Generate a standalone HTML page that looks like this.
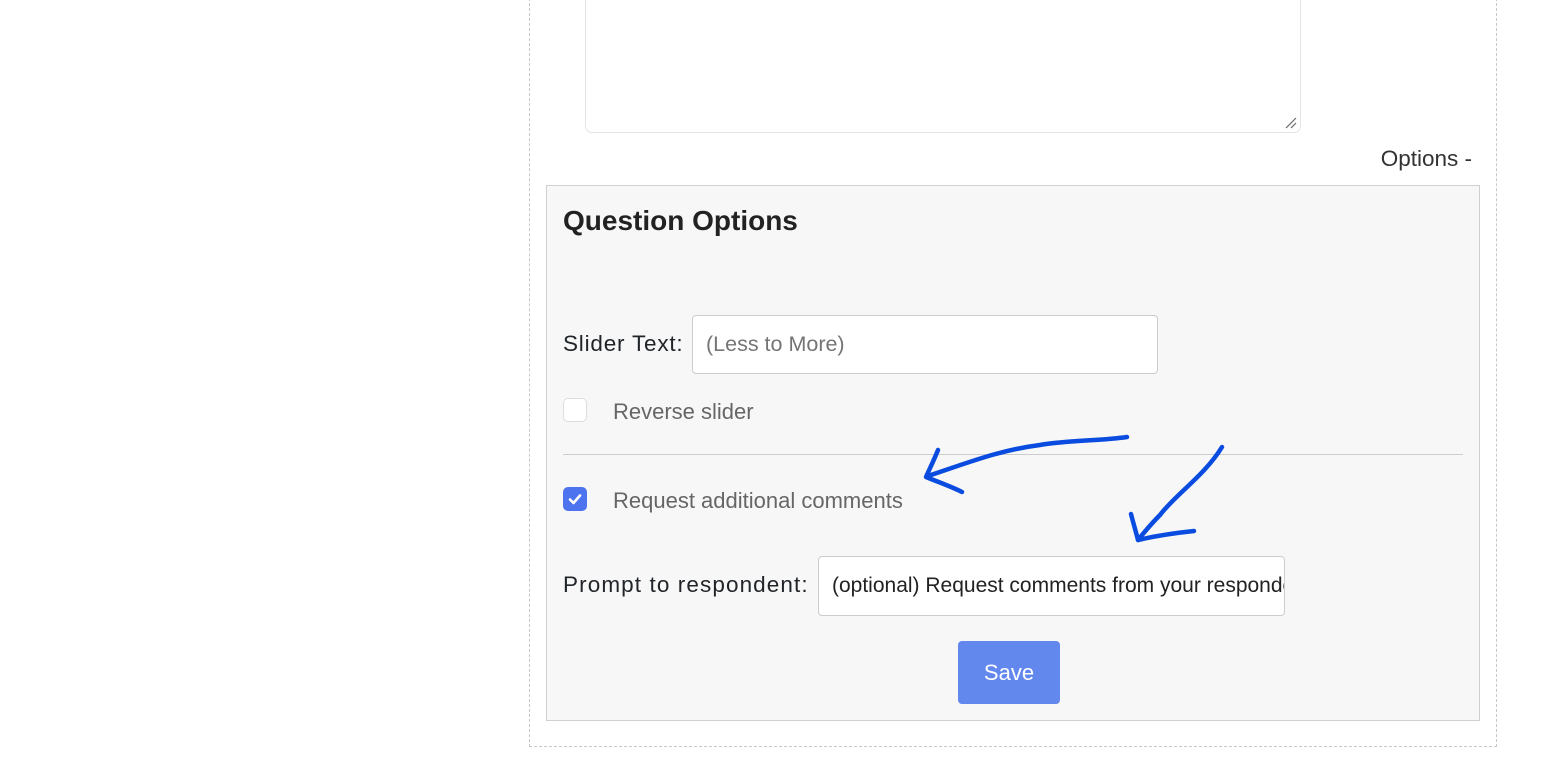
<!DOCTYPE html>
<html><head><style>
html,body{margin:0;padding:0;width:1568px;height:768px;background:#fff;overflow:hidden;font-family:"Liberation Sans",sans-serif;color:#212529;position:relative}
.abs{position:absolute}
</style></head><body>
<div class="abs" style="left:529px;top:-2px;width:966px;height:748px;border:1px dashed #c8c8c8;border-top:none"></div>
<div class="abs" style="left:585px;top:-6px;width:714px;height:137px;border:1px solid #e2e4e8;border-radius:7px;background:#fff"></div>
<svg class="abs" style="left:1284px;top:116px" width="14" height="14"><path d="M2 12L12 2M7 12L12 7" stroke="#666" stroke-width="1.2"/></svg>
<div class="abs" style="left:1300px;width:172px;text-align:right;top:146px;font-size:22.5px;color:#333">Options -</div>
<div class="abs" style="left:546px;top:185px;width:932px;height:534px;border:1px solid #d0d0d0;background:#f7f7f7"></div>
<div class="abs" style="left:563px;top:205px;font-size:28px;font-weight:bold;color:#222">Question Options</div>
<div class="abs" style="left:563px;top:331px;font-size:22.5px;letter-spacing:0.8px">Slider Text:</div>
<div class="abs" style="left:692px;top:315px;width:466px;height:59px;border:1px solid #ccc;border-radius:4px;background:#fff;box-sizing:border-box;padding:16px 13px;font-size:21.5px;color:#757575">(Less to More)</div>
<div class="abs" style="left:563px;top:398px;width:24px;height:24px;border:1px solid #ddd;border-radius:5px;background:#fff;box-sizing:border-box"></div>
<div class="abs" style="left:613px;top:399px;font-size:22px;color:#666">Reverse slider</div>
<div class="abs" style="left:563px;top:454px;width:900px;height:1px;background:#ccc"></div>
<div class="abs" style="left:563px;top:487px;width:24px;height:24px;border-radius:5px;background:#4e73ef"></div>
<svg class="abs" style="left:563px;top:487px" width="24" height="24"><path d="M7 12.5L10.5 16L17 8.5" stroke="#fff" stroke-width="2.6" fill="none" stroke-linecap="round" stroke-linejoin="round"/></svg>
<div class="abs" style="left:613px;top:488px;font-size:22px;color:#666">Request additional comments</div>
<div class="abs" style="left:563px;top:572px;font-size:22.5px;letter-spacing:1.1px">Prompt to respondent:</div>
<div class="abs" style="left:818px;top:556px;width:467px;height:60px;border:1px solid #ccc;border-radius:4px;background:#fff;box-sizing:border-box;padding:17px 13px;font-size:21px;color:#222;white-space:nowrap;overflow:hidden">(optional) Request comments from your respondents</div>
<div class="abs" style="left:958px;top:641px;width:102px;height:63px;background:#6288ee;border-radius:4px;color:#fff;font-size:22px;text-align:center;line-height:63px">Save</div>
<svg class="abs" style="left:0;top:0" width="1568" height="768"><g stroke="#0a4ce0" stroke-width="4.5" fill="none" stroke-linecap="round" stroke-linejoin="round">
<path d="M1127 437C1100 441 1070 440 1040 445C1000 450 970 462 928 476"/>
<path d="M938 450C934 460 930 468 926 477C938 482 950 486 962 492"/>
<path d="M1222 447C1205 475 1175 495 1160 515C1150 525 1142 535 1138 540"/>
<path d="M1131 514C1133 522 1136 532 1138 540C1155 536 1175 533 1194 531"/>
</g></svg>
</body></html>
